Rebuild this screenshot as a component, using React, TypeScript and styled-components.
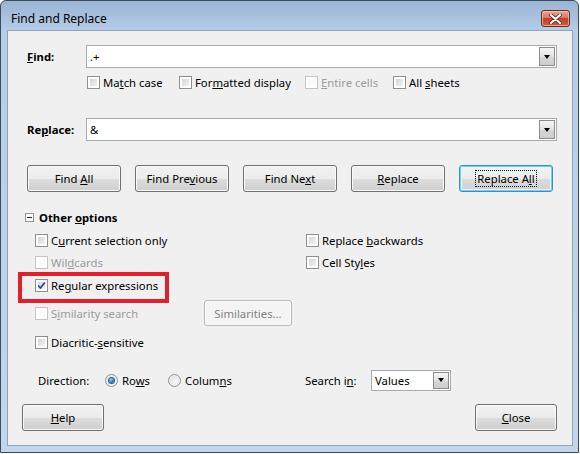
import React, { FC, ReactNode } from 'react';
import styled, { createGlobalStyle, css } from 'styled-components';

const GlobalStyle = createGlobalStyle`
    html, body {
        margin: 0;
        padding: 0;
        background: #ffffff;
    }
    body {
        font-family: "Noto Sans", "Open Sans", sans-serif;
        font-size: 11.3px;
        color: #000;
    }
`;

const Window = styled.div`
    width: 579px;
    height: 453px;
    box-sizing: border-box;
    border: 1px solid #3e4a57;
    border-radius: 6px 6px 0 0;
    background: linear-gradient(#9ab4d4 0, #b6cde8 30px, #c2d7ee 100%);
    display: flex;
    flex-direction: column;
    padding: 0 5px 6px 6px;
`;

const TitleBar = styled.div`
    height: 29px;
    display: flex;
    align-items: flex-start;
    justify-content: space-between;
    padding: 0 3px 0 4px;
    font-family: "Noto Sans", sans-serif;
    font-size: 12px;
    color: #000;
`;

const Title = styled.span`
    margin-top: 10px;
    line-height: 16px;
`;

const CloseButton = styled.div`
    width: 29px;
    height: 17px;
    margin-top: 9px;
    box-sizing: border-box;
    border: 1px solid #6d2a20;
    border-radius: 3px;
    background: linear-gradient(#e7a693 0, #d77a64 45%, #c2412a 50%, #cf5a40 100%);
    box-shadow: inset 0 0 0 1px rgba(255, 210, 200, 0.6);
    display: flex;
    align-items: center;
    justify-content: center;
`;

const Client = styled.div`
    flex: 1;
    background: #f0f0f0;
    border: 1px solid #8fa3bb;
    display: flex;
    flex-direction: column;
    padding: 14px 14px 12px 14px;
    position: relative;
`;

const FieldGrid = styled.div`
    display: grid;
    grid-template-columns: 59px 1fr;
    padding-left: 5px;
    padding-right: 1px;
    align-items: center;
`;

const FieldLabel = styled.label`
    font-weight: bold;
`;

const Combo = styled.div<{ $width?: number }>`
    height: 23px;
    ${(p) => p.$width && css`width: ${p.$width}px;`}
    box-sizing: border-box;
    border: 1px solid #a5abb3;
    background: #fff;
    display: flex;
    align-items: center;
    padding: 0 1px 0 3px;
`;

const ComboText = styled.span`
    flex: 1;
`;

const DropButton = styled.div`
    width: 16px;
    height: 19px;
    box-sizing: border-box;
    border: 1px solid #8c8c8c;
    background: linear-gradient(#f6f6f6, #e2e2e2 50%, #d6d6d6 51%, #cecece);
    display: flex;
    align-items: center;
    justify-content: center;
    &::after {
        content: '';
        border-left: 3px solid transparent;
        border-right: 3px solid transparent;
        border-top: 4px solid #000;
    }
`;

const CheckRow = styled.div`
    grid-column: 2;
    display: flex;
    margin-top: 7px;
    padding-left: 1px;
    height: 14px;
    align-items: center;
`;

const CheckItem = styled.label<{ $width?: number; $disabled?: boolean }>`
    display: flex;
    align-items: center;
    gap: 3px;
    white-space: nowrap;
    ${(p) => p.$width && css`width: ${p.$width}px;`}
    color: ${(p) => (p.$disabled ? '#9b9b9b' : '#000')};
`;

const Box = styled.span<{ $disabled?: boolean }>`
    width: 13px;
    height: 13px;
    box-sizing: border-box;
    flex: none;
    border: 1px solid ${(p) => (p.$disabled ? '#c4c4c4' : '#8e8f8f')};
    background: ${(p) =>
        p.$disabled
            ? '#fbfbfb'
            : 'linear-gradient(135deg, #cbcbcb 0%, #e4e4e4 50%, #f8f8f8 100%)'};
    box-shadow: inset 0 0 0 2px #fff;
    display: flex;
    align-items: center;
    justify-content: center;
`;

const RadioCircle = styled.span<{ $on?: boolean }>`
    width: 13px;
    height: 13px;
    box-sizing: border-box;
    flex: none;
    border-radius: 50%;
    border: 1px solid #8e8f8f;
    background: radial-gradient(circle at 60% 60%, #fbfbfb, #d4d4d4);
    box-shadow: inset 0 0 0 1px #f4f4f4;
    display: flex;
    align-items: center;
    justify-content: center;
    ${(p) =>
        p.$on &&
        css`
            &::after {
                content: '';
                width: 5px;
                height: 5px;
                border-radius: 50%;
                background: radial-gradient(circle at 40% 35%, #8fd0fb, #1967a8 70%);
                box-shadow: 0 0 0 1px #2a5f8f;
            }
        `}
`;

const ButtonRow = styled.div`
    display: flex;
    gap: 14px;
    padding-left: 5px;
    margin-top: 24px;
`;

const Button = styled.div<{ $width?: number; $default?: boolean; $disabled?: boolean }>`
    width: ${(p) => p.$width ?? 94}px;
    height: 27px;
    box-sizing: border-box;
    border: 1px solid ${(p) => (p.$default ? '#3c8ccc' : p.$disabled ? '#b5b9bc' : '#707070')};
    border-radius: 3px;
    background: ${(p) =>
        p.$disabled
            ? '#f4f4f4'
            : 'linear-gradient(#f2f2f2 0%, #ebebeb 50%, #dddddd 51%, #cfcfcf 100%)'};
    box-shadow: ${(p) =>
        p.$default ? 'inset 0 0 0 1px #6fd0f5, inset 0 0 0 2px #e6f6fd' : 'inset 0 0 0 1px #fbfbfb'};
    color: ${(p) => (p.$disabled ? '#838383' : '#000')};
    display: flex;
    align-items: center;
    justify-content: center;
    white-space: nowrap;
`;

const Caption = styled.span<{ $focus?: boolean }>`
    line-height: 15px;
    ${(p) =>
        p.$focus &&
        css`
            outline: 1px dotted #000;
            padding: 0 1px;
        `}
`;

const SectionHeader = styled.div`
    display: flex;
    align-items: center;
    gap: 5px;
    margin-top: 18px;
    padding-left: 3px;
    font-weight: bold;
    height: 14px;
`;

const Expander = styled.span`
    width: 9px;
    height: 9px;
    box-sizing: border-box;
    border: 1px solid #939393;
    background: #fff;
    display: flex;
    align-items: center;
    justify-content: center;
    &::after {
        content: '';
        width: 5px;
        height: 1px;
        background: #2b2b2b;
    }
`;

const OptionsGrid = styled.div`
    display: grid;
    grid-template-columns: 169px 102px 1fr;
    grid-template-rows: 22px 23px 23px 32px 26px;
    align-items: center;
    padding-left: 13px;
    margin-top: 5px;
`;

const Highlight = styled.div`
    position: relative;
    &::before {
        content: '';
        position: absolute;
        left: -17px;
        top: -6px;
        width: 151px;
        height: 31px;
        box-sizing: border-box;
        border: 4px solid #e3202a;
        pointer-events: none;
    }
`;

const BottomRow = styled.div`
    display: flex;
    align-items: center;
    height: 22px;
    margin-top: 14px;
    padding-left: 16px;
`;

const DirectionGroup = styled.div`
    width: 267px;
    display: flex;
    align-items: center;
`;

const InlineLabel = styled.span<{ $width: number }>`
    width: ${(p) => p.$width}px;
    flex: none;
`;

const RadioItem = styled.label<{ $width?: number }>`
    display: flex;
    align-items: center;
    gap: 4px;
    ${(p) => p.$width && css`width: ${p.$width}px;`}
`;

const Footer = styled.div`
    display: flex;
    justify-content: space-between;
    margin-top: 13px;
    padding-right: 1px;
`;

type CheckProps = {
    label: ReactNode;
    checked?: boolean;
    disabled?: boolean;
    width?: number;
};

const Check: FC<CheckProps> = ({ label, checked, disabled, width }) => (
    <CheckItem $width={width} $disabled={disabled}>
        <Box $disabled={disabled}>
            {checked && (
                <svg width="9" height="9" viewBox="0 0 9 9">
                    <path d="M1.2 4.6 L3.5 7 L7.8 1.4" fill="none" stroke="#30468a" strokeWidth="1.7" />
                </svg>
            )}
        </Box>
        <span>{label}</span>
    </CheckItem>
);

const App: FC = () => (
    <>
        <GlobalStyle />
        <Window>
            <TitleBar>
                <Title>Find and Replace</Title>
                <CloseButton>
                    <svg width="13" height="10" viewBox="0 0 13 10">
                        <path
                            d="M2 1 L11 9 M11 1 L2 9"
                            stroke="#5b2218"
                            strokeWidth="3.6"
                            strokeLinecap="round"
                        />
                        <path
                            d="M2 1 L11 9 M11 1 L2 9"
                            stroke="#fff"
                            strokeWidth="2.2"
                            strokeLinecap="round"
                        />
                    </svg>
                </CloseButton>
            </TitleBar>
            <Client>
                <FieldGrid>
                    <FieldLabel>
                        <u>F</u>ind:
                    </FieldLabel>
                    <Combo>
                        <ComboText>.+</ComboText>
                        <DropButton />
                    </Combo>
                    <CheckRow>
                        <Check width={92} label={<>Ma<u>t</u>ch case</>} />
                        <Check width={126} label={<>For<u>m</u>atted display</>} />
                        <Check width={88} disabled label={<><u>E</u>ntire cells</>} />
                        <Check label={<>All <u>s</u>heets</>} />
                    </CheckRow>
                </FieldGrid>
                <FieldGrid style={{ marginTop: 29 }}>
                    <FieldLabel>
                        Re<u>p</u>lace:
                    </FieldLabel>
                    <Combo>
                        <ComboText>&amp;</ComboText>
                        <DropButton />
                    </Combo>
                </FieldGrid>
                <ButtonRow>
                    <Button><Caption>Find <u>A</u>ll</Caption></Button>
                    <Button><Caption>Find Pre<u>v</u>ious</Caption></Button>
                    <Button><Caption>Find Ne<u>x</u>t</Caption></Button>
                    <Button><Caption><u>R</u>eplace</Caption></Button>
                    <Button $default>
                        <Caption $focus>Replace A<u>l</u>l</Caption>
                    </Button>
                </ButtonRow>
                <SectionHeader>
                    <Expander />
                    <span>Other <u>o</u>ptions</span>
                </SectionHeader>
                <OptionsGrid>
                    <Check label={<>C<u>u</u>rrent selection only</>} />
                    <span />
                    <Check label={<>Replace <u>b</u>ackwards</>} />
                    <Check disabled label={<>Wil<u>d</u>cards</>} />
                    <span />
                    <Check label={<>Cell Sty<u>l</u>es</>} />
                    <Highlight>
                        <Check checked label={<>Re<u>g</u>ular expressions</>} />
                    </Highlight>
                    <span />
                    <span />
                    <Check disabled label={<>S<u>i</u>milarity search</>} />
                    <Button $width={88} $disabled style={{ height: 26 }}>
                        <Caption>Similarities...</Caption>
                    </Button>
                    <span />
                    <Check label={<>Diacritic-<u>s</u>ensitive</>} />
                </OptionsGrid>
                <BottomRow>
                    <DirectionGroup>
                        <InlineLabel $width={67}>Direction:</InlineLabel>
                        <RadioItem $width={63}>
                            <RadioCircle $on />
                            <span>Ro<u>w</u>s</span>
                        </RadioItem>
                        <RadioItem>
                            <RadioCircle />
                            <span>Colum<u>n</u>s</span>
                        </RadioItem>
                    </DirectionGroup>
                    <InlineLabel $width={66}>Search i<u>n</u>:</InlineLabel>
                    <Combo $width={80} style={{ height: 21 }}>
                        <ComboText>Values</ComboText>
                        <DropButton style={{ height: 17 }} />
                    </Combo>
                </BottomRow>
                <Footer>
                    <Button $width={82}><Caption><u>H</u>elp</Caption></Button>
                    <Button $width={82}><Caption><u>C</u>lose</Caption></Button>
                </Footer>
            </Client>
        </Window>
    </>
);

export default App;
